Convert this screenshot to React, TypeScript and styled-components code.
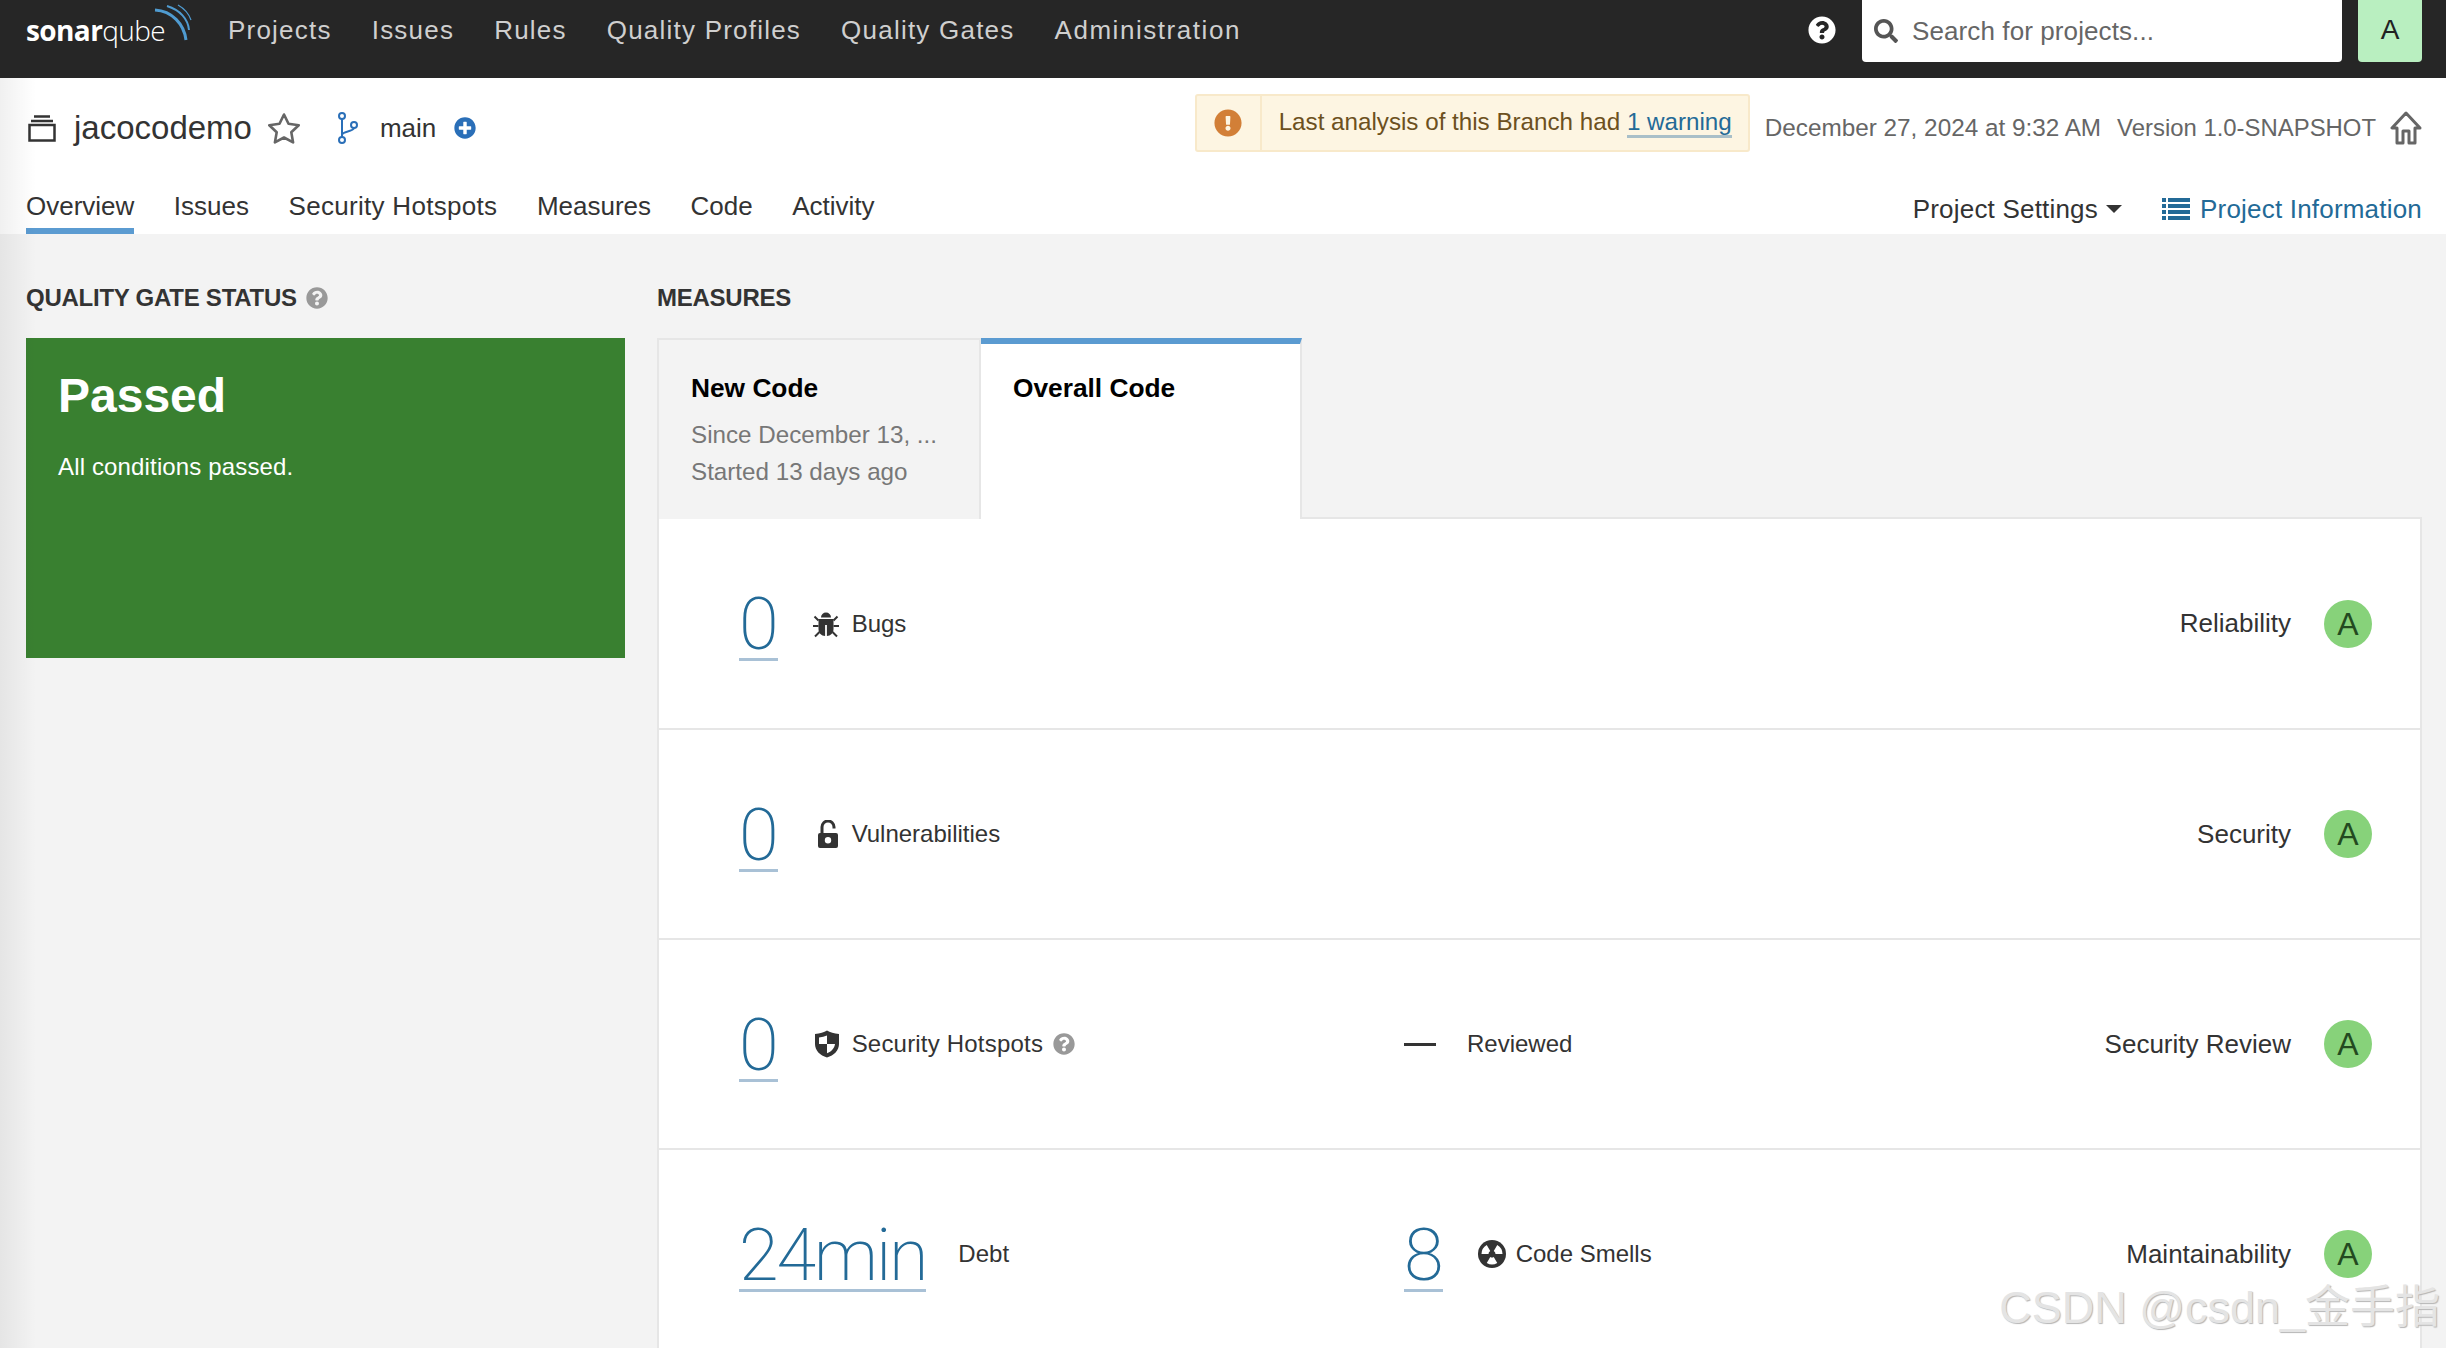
import React from 'react';
import styled, { createGlobalStyle } from 'styled-components';
import { FaExclamationCircle, FaPlusCircle, FaQuestionCircle, FaSearch } from 'react-icons/fa';

const GlobalStyle = createGlobalStyle`
  html, body {
    margin: 0;
    padding: 0;
    background: #f3f3f3;
  }
  body {
    font-family: "Liberation Sans", Arial, sans-serif;
    font-size: 26px;
    color: #333;
  }
`;

const Page = styled.div`
  position: relative;
  width: 2446px;
  height: 1348px;
  overflow: hidden;
  background: #f3f3f3;
`;

const LeftShade = styled.div`
  position: absolute;
  left: 0;
  top: 78px;
  bottom: 0;
  width: 36px;
  background: linear-gradient(to right, rgba(0, 0, 0, 0.06), rgba(0, 0, 0, 0));
  pointer-events: none;
`;

const TopBar = styled.header`
  display: flex;
  align-items: flex-start;
  height: 78px;
  padding: 0 24px 0 26px;
  background: #262626;
`;

const Logo = styled.div`
  position: relative;
  display: flex;
  align-items: baseline;
  width: 202px;
  height: 60px;
  line-height: 60px;
  font-family: "Open Sans", sans-serif;
  font-size: 28px;
  letter-spacing: -0.6px;
  color: #fff;
`;

const LogoBold = styled.span`
  font-weight: 700;
`;

const LogoLight = styled.span`
  font-weight: 300;
`;

const LogoWaves = styled.svg`
  position: absolute;
  left: 126px;
  top: 2px;
`;

const MainNav = styled.nav`
  display: flex;
  gap: 40px;
`;

const MainNavItem = styled.a`
  line-height: 60px;
  font-size: 26px;
  letter-spacing: 1.22px;
  color: #cfcfcf;
  &:last-child {
    letter-spacing: 1.55px;
  }
`;

const TopRight = styled.div`
  display: flex;
  align-items: flex-start;
  margin-left: auto;
`;

const HelpButton = styled.div`
  display: flex;
  align-items: center;
  height: 60px;
  margin-right: 26px;
  color: #fff;
  font-size: 28px;
`;

const SearchBox = styled.div`
  display: flex;
  align-items: center;
  gap: 14px;
  box-sizing: border-box;
  width: 480px;
  height: 62px;
  padding: 0 12px;
  background: #fff;
  border-radius: 0 0 4px 4px;
  color: #666;
  font-size: 26px;
  letter-spacing: 0.1px;
  svg {
    font-size: 24px;
    color: #555;
  }
`;

const Avatar = styled.div`
  width: 64px;
  height: 62px;
  margin-left: 16px;
  background: #b9efc0;
  border-radius: 0 0 4px 4px;
  color: #222;
  font-size: 28px;
  line-height: 60px;
  text-align: center;
`;

const ProjectHeader = styled.section`
  height: 156px;
  background: #fff;
`;

const ProjectRow = styled.div`
  display: flex;
  align-items: center;
  height: 100px;
  padding: 0 24px 0 28px;
`;

const ProjectName = styled.span`
  margin-left: 18px;
  font-size: 33px;
  color: #333;
`;

const StarIcon = styled.svg`
  margin-left: 15px;
`;

const BranchIcon = styled.svg`
  margin-left: 36px;
`;

const BranchName = styled.span`
  margin-left: 21px;
  font-size: 26px;
`;

const AddBranch = styled.span`
  display: flex;
  margin-left: 18px;
  font-size: 22px;
  color: #2a6fb8;
`;

const WarningBox = styled.div`
  display: flex;
  align-self: flex-start;
  box-sizing: border-box;
  height: 58px;
  margin: 16px 0 0 auto;
  background: #fdf5e2;
  border: 2px solid #f8e9ca;
  border-radius: 3px;
  color: #6c5020;
  font-size: 24.2px;
  line-height: 52px;
`;

const WarningIcon = styled.div`
  display: flex;
  align-items: center;
  justify-content: center;
  width: 63px;
  border-right: 2px solid #f8e9ca;
  color: #d27f37;
  font-size: 28px;
`;

const WarningText = styled.div`
  padding: 0 16px 0 17px;
`;

const WarningLink = styled.a`
  color: #236a97;
  border-bottom: 3px solid #a9bfc8;
`;

const MetaText = styled.span<{ $gap: number; $size: number }>`
  margin-left: ${(p) => p.$gap}px;
  color: #666;
  font-size: ${(p) => p.$size}px;
`;

const HomeIcon = styled.svg`
  margin-left: 14px;
`;

const TabsRow = styled.div`
  display: flex;
  align-items: stretch;
  height: 56px;
  padding: 0 24px 0 26px;
`;

const ProjectTab = styled.a<{ $active?: boolean; $wide?: boolean }>`
  box-sizing: border-box;
  height: 56px;
  padding-top: 3px;
  margin-right: 39.5px;
  border-bottom: 6px solid ${(p) => (p.$active ? '#5b9bd1' : 'transparent')};
  font-size: 26px;
  letter-spacing: ${(p) => (p.$wide ? '0.3px' : '0')};
  line-height: 50px;
  color: #333;
`;

const SettingsMenu = styled.a`
  display: flex;
  align-items: center;
  gap: 8px;
  height: 56px;
  padding-top: 6px;
  box-sizing: border-box;
  margin-left: auto;
  font-size: 26px;
  letter-spacing: 0.2px;
  color: #333;
`;

const Caret = styled.span`
  width: 0;
  height: 0;
  border-left: 8px solid transparent;
  border-right: 8px solid transparent;
  border-top: 8px solid #333;
`;

const InfoLink = styled.a`
  display: flex;
  align-items: center;
  gap: 10px;
  height: 56px;
  padding-top: 6px;
  box-sizing: border-box;
  margin-left: 40px;
  font-size: 26px;
  letter-spacing: 0.2px;
  color: #236a97;
`;

const Content = styled.main`
  display: flex;
  gap: 32px;
  padding: 0 24px 0 26px;
`;

const GateColumn = styled.div`
  flex: none;
  width: 599px;
`;

const MeasuresColumn = styled.div`
  flex: 1;
  min-width: 0;
`;

const SectionTitle = styled.h2`
  display: flex;
  align-items: center;
  gap: 9px;
  height: 32px;
  margin: 48px 0 24px;
  font-size: 24px;
  font-weight: 700;
  letter-spacing: -0.25px;
  text-transform: uppercase;
  color: #333;
  svg {
    font-size: 22px;
    color: #999;
  }
`;

const GateCard = styled.div`
  box-sizing: border-box;
  height: 320px;
  padding: 30px 32px;
  background: #398030;
  color: #fff;
`;

const GateStatus = styled.div`
  font-size: 48px;
  font-weight: 700;
  line-height: 56px;
`;

const GateDetail = styled.div`
  margin-top: 28px;
  font-size: 24px;
  letter-spacing: 0.15px;
  line-height: 30px;
`;

const PeriodTabs = styled.div`
  position: relative;
  z-index: 1;
  display: flex;
  height: 181px;
  margin-bottom: -2px;
`;

const PeriodTab = styled.div<{ $active?: boolean }>`
  box-sizing: border-box;
  width: ${(p) => (p.$active ? 321 : 324)}px;
  padding: ${(p) => (p.$active ? '28px 32px' : '32px 32px')};
  background: ${(p) => (p.$active ? '#fff' : '#f3f3f3')};
  border-top: ${(p) => (p.$active ? '6px solid #5b9bd1' : '2px solid #e6e6e6')};
  border-left: ${(p) => (p.$active ? 'none' : '2px solid #e6e6e6')};
  border-right: 2px solid #e6e6e6;
`;

const PeriodTitle = styled.div`
  margin-bottom: 12px;
  font-size: 26.3px;
  font-weight: 700;
  line-height: 32px;
  color: #000;
`;

const PeriodLine = styled.div`
  font-size: 24.2px;
  line-height: 37px;
  color: #777;
`;

const MeasuresPanel = styled.div`
  background: #fff;
  border: 2px solid #e6e6e6;
  border-bottom: none;
`;

const MeasureRow = styled.div`
  display: grid;
  grid-template-columns: 665px 1fr auto;
  align-items: center;
  box-sizing: border-box;
  height: 210px;
  padding: 0 48px 0 80px;
  border-bottom: 2px solid #e6e6e6;
  &:first-child {
    height: 211px;
  }
`;

const MeasureGroup = styled.div`
  display: flex;
  align-items: center;
`;

const BigValue = styled.a<{ $tight?: boolean }>`
  display: block;
  height: 72px;
  border-bottom: 3px solid #a9c1d6;
  font-family: Roboto, sans-serif;
  font-size: 72px;
  font-weight: 200;
  line-height: 78px;
  letter-spacing: ${(p) => (p.$tight ? '-2.2px' : '-1px')};
  color: #236a97;
`;

const Dash = styled.span`
  width: 32px;
  height: 3px;
  background: #333;
`;

const MeasureIcon = styled.svg`
  flex: none;
  margin-left: 35px;
`;

const MeasureLabel = styled.span<{ $gap: number }>`
  margin-left: ${(p) => p.$gap}px;
  font-size: 24px;
  color: #333;
`;

const HotspotLabel = styled(MeasureLabel)`
  letter-spacing: 0.2px;
`;

const LabelHelp = styled.span`
  display: flex;
  margin-left: 10px;
  font-size: 22px;
  color: #999;
`;

const RatingGroup = styled.div`
  display: flex;
  grid-column: 3;
  align-items: center;
  gap: 33px;
  font-size: 26px;
  color: #333;
`;

const RatingBadge = styled.span`
  width: 48px;
  height: 48px;
  border-radius: 50%;
  background: #87d27a;
  color: #234a20;
  font-size: 32px;
  line-height: 48px;
  text-align: center;
`;

const Watermark = styled.div`
  position: absolute;
  right: 6px;
  top: 1282px;
  font-family: "Liberation Sans", "Noto Sans CJK SC", sans-serif;
  font-size: 45px;
  line-height: 52px;
  color: #e4e4e4;
  text-shadow: 1px 1px 1px #b5b5b5;
  white-space: nowrap;
`;

const ProjectGlyph = () => (
  <svg width="28" height="27" viewBox="0 0 28 27" fill="none" stroke="#333" strokeWidth="2.5">
    <path d="M6 1.500h16M3 6h22" />
    <rect x="1.500" y="10" width="25" height="15.500" />
  </svg>
);

const BugGlyph = () => (
  <MeasureIcon width="26" height="28" viewBox="0 0 26 28" fill="#333">
    <path d="M8 7.500a5 5 0 0 1 10 0z" />
    <path d="M5.500 9h15v10c0 4-3 7-6.600 7V15h-1.800v11C8.500 26 5.500 23 5.500 19z" />
    <path d="M5.500 10.500 1.500 6.500M20.500 10.500l4-4M5.500 16H0M20.500 16H26M6.500 22l-4.500 4.500M19.500 22l4.500 4.500" stroke="#333" strokeWidth="2" fill="none" />
  </MeasureIcon>
);

const LockGlyph = () => (
  <MeasureIcon width="26" height="28" viewBox="0 0 26 28" fill="#333">
    <path d="M9 14V7a6 6 0 0 1 12 0v1.500" fill="none" stroke="#333" strokeWidth="3" />
    <path fillRule="evenodd" d="M7 13h16a2 2 0 0 1 2 2v11a2 2 0 0 1-2 2H7a2 2 0 0 1-2-2V15a2 2 0 0 1 2-2zm8 4a3.200 3.200 0 1 0 0 6.400 3.200 3.200 0 0 0 0-6.400z" />
  </MeasureIcon>
);

const ShieldGlyph = () => (
  <MeasureIcon width="26" height="28" viewBox="0 0 26 28">
    <path d="M14 .5c3 2 7 3 12 3.500v10c0 6.500-5 11.500-12 13.500C7 25.500 2 20.500 2 14V4C7 3.500 11 2.500 14 .5z" fill="#333" />
    <path d="M14 5.500c-2.300 1-5 1.700-8 2.100V14h8zM14 14v9.200c4.500-1.700 7.500-5 8-9.200z" fill="#fff" />
  </MeasureIcon>
);

const SmellGlyph = () => (
  <MeasureIcon width="28" height="28" viewBox="0 0 28 28">
    <circle cx="14" cy="14" r="14" fill="#333" />
    <path
      d="M15.750 10.970 19.250 4.900A10.500 10.500 0 0 1 24.500 14H17.500A3.500 3.500 0 0 0 15.750 10.970zM12.250 10.970 8.750 4.900A10.500 10.500 0 0 0 3.500 14H10.500A3.500 3.500 0 0 1 12.250 10.970zM15.750 17.030 19.250 23.100A10.500 10.500 0 0 1 8.750 23.100L12.250 17.030A3.500 3.500 0 0 0 15.750 17.030z"
      fill="#fff"
    />
  </MeasureIcon>
);

const App = () => (
  <Page>
    <GlobalStyle />
    <TopBar>
      <Logo>
        <LogoBold>sonar</LogoBold>
        <LogoLight>qube</LogoLight>
        <LogoWaves width="44" height="44" viewBox="0 0 44 44" fill="none" stroke="#4f9bd0">
          <path d="M3 8c17 1 29 14 31 30" strokeWidth="3" />
          <path d="M15 4c13 4 21 13 22 24" strokeWidth="2" />
          <path d="M26 3c7 4 11 9 13 15" strokeWidth="1.200" />
        </LogoWaves>
      </Logo>
      <MainNav>
        <MainNavItem>Projects</MainNavItem>
        <MainNavItem>Issues</MainNavItem>
        <MainNavItem>Rules</MainNavItem>
        <MainNavItem>Quality Profiles</MainNavItem>
        <MainNavItem>Quality Gates</MainNavItem>
        <MainNavItem>Administration</MainNavItem>
      </MainNav>
      <TopRight>
        <HelpButton>
          <FaQuestionCircle />
        </HelpButton>
        <SearchBox>
          <FaSearch />
          Search for projects...
        </SearchBox>
        <Avatar>A</Avatar>
      </TopRight>
    </TopBar>

    <ProjectHeader>
      <ProjectRow>
        <ProjectGlyph />
        <ProjectName>jacocodemo</ProjectName>
        <StarIcon width="34" height="32" viewBox="0 0 34 32" fill="none" stroke="#666" strokeWidth="2.600" strokeLinejoin="round">
          <path d="M17 2.500l4.500 9.300 10.200 1.400-7.400 7.100 1.800 10.100-9.100-4.900-9.100 4.900 1.800-10.100-7.400-7.100 10.200-1.400z" />
        </StarIcon>
        <BranchIcon width="22" height="32" viewBox="0 0 22 32" fill="none" stroke="#2a6fb8" strokeWidth="2">
          <circle cx="5" cy="4" r="3" />
          <circle cx="5" cy="28" r="3" />
          <circle cx="17" cy="13" r="3" />
          <path d="M5 7v18M5 23c0-4 11-3 12-7" />
        </BranchIcon>
        <BranchName>main</BranchName>
        <AddBranch>
          <FaPlusCircle />
        </AddBranch>
        <WarningBox>
          <WarningIcon>
            <FaExclamationCircle />
          </WarningIcon>
          <WarningText>
            Last analysis of this Branch had <WarningLink>1 warning</WarningLink>
          </WarningText>
        </WarningBox>
        <MetaText $gap={15} $size={24.3}>December 27, 2024 at 9:32 AM</MetaText>
        <MetaText $gap={16} $size={23.9}>Version 1.0-SNAPSHOT</MetaText>
        <HomeIcon width="32" height="34" viewBox="0 0 32 34" fill="none" stroke="#666" strokeWidth="3" strokeLinejoin="round">
          <path d="M16 2 2 17h5v15h6V20h6v12h6V17h5z" />
        </HomeIcon>
      </ProjectRow>
      <TabsRow>
        <ProjectTab $active>Overview</ProjectTab>
        <ProjectTab>Issues</ProjectTab>
        <ProjectTab $wide>Security Hotspots</ProjectTab>
        <ProjectTab>Measures</ProjectTab>
        <ProjectTab>Code</ProjectTab>
        <ProjectTab>Activity</ProjectTab>
        <SettingsMenu>
          Project Settings
          <Caret />
        </SettingsMenu>
        <InfoLink>
          <svg width="28" height="24" viewBox="0 0 28 24" fill="#236a97">
            <path d="M0 1h4v4H0zM6 1h22v4H6zM0 7h4v4H0zM6 7h22v4H6zM0 13h4v4H0zM6 13h22v4H6zM0 19h4v4H0zM6 19h22v4H6z" />
          </svg>
          Project Information
        </InfoLink>
      </TabsRow>
    </ProjectHeader>

    <Content>
      <GateColumn>
        <SectionTitle>
          Quality Gate Status
          <FaQuestionCircle />
        </SectionTitle>
        <GateCard>
          <GateStatus>Passed</GateStatus>
          <GateDetail>All conditions passed.</GateDetail>
        </GateCard>
      </GateColumn>
      <MeasuresColumn>
        <SectionTitle>Measures</SectionTitle>
        <PeriodTabs>
          <PeriodTab>
            <PeriodTitle>New Code</PeriodTitle>
            <PeriodLine>Since December 13, ...</PeriodLine>
            <PeriodLine>Started 13 days ago</PeriodLine>
          </PeriodTab>
          <PeriodTab $active>
            <PeriodTitle>Overall Code</PeriodTitle>
          </PeriodTab>
        </PeriodTabs>
        <MeasuresPanel>
          <MeasureRow>
            <MeasureGroup>
              <BigValue>0</BigValue>
              <BugGlyph />
              <MeasureLabel $gap={13}>Bugs</MeasureLabel>
            </MeasureGroup>
            <RatingGroup>
              Reliability
              <RatingBadge>A</RatingBadge>
            </RatingGroup>
          </MeasureRow>
          <MeasureRow>
            <MeasureGroup>
              <BigValue>0</BigValue>
              <LockGlyph />
              <MeasureLabel $gap={13}>Vulnerabilities</MeasureLabel>
            </MeasureGroup>
            <RatingGroup>
              Security
              <RatingBadge>A</RatingBadge>
            </RatingGroup>
          </MeasureRow>
          <MeasureRow>
            <MeasureGroup>
              <BigValue>0</BigValue>
              <ShieldGlyph />
              <HotspotLabel $gap={13}>Security Hotspots</HotspotLabel>
              <LabelHelp>
                <FaQuestionCircle />
              </LabelHelp>
            </MeasureGroup>
            <MeasureGroup>
              <Dash />
              <MeasureLabel $gap={31}>Reviewed</MeasureLabel>
            </MeasureGroup>
            <RatingGroup>
              Security Review
              <RatingBadge>A</RatingBadge>
            </RatingGroup>
          </MeasureRow>
          <MeasureRow>
            <MeasureGroup>
              <BigValue $tight>24min</BigValue>
              <MeasureLabel $gap={32}>Debt</MeasureLabel>
            </MeasureGroup>
            <MeasureGroup>
              <BigValue>8</BigValue>
              <SmellGlyph />
              <MeasureLabel $gap={10}>Code Smells</MeasureLabel>
            </MeasureGroup>
            <RatingGroup>
              Maintainability
              <RatingBadge>A</RatingBadge>
            </RatingGroup>
          </MeasureRow>
        </MeasuresPanel>
      </MeasuresColumn>
    </Content>

    <LeftShade />
    <Watermark>CSDN @csdn_金手指</Watermark>
  </Page>
);

export default App;
